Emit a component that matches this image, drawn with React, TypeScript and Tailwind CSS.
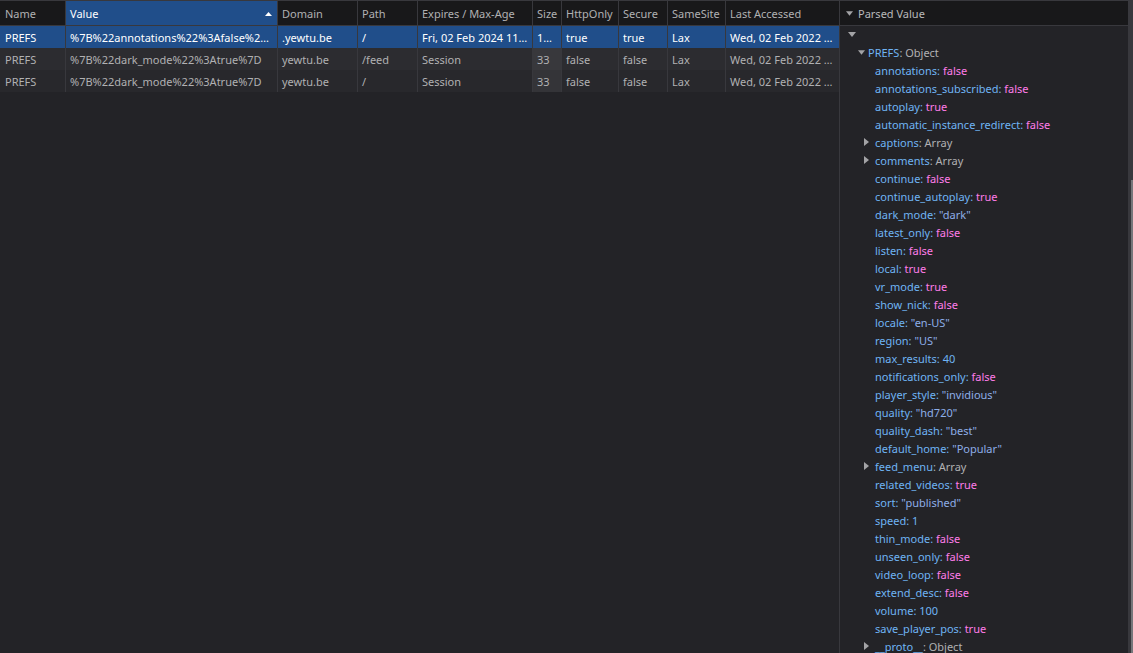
import React from "react";

const cols = [
  { name: "Name", w: 65 },
  { name: "Value", w: 212 },
  { name: "Domain", w: 80 },
  { name: "Path", w: 60 },
  { name: "Expires / Max-Age", w: 115 },
  { name: "Size", w: 29 },
  { name: "HttpOnly", w: 57 },
  { name: "Secure", w: 49 },
  { name: "SameSite", w: 58 },
  { name: "Last Accessed", w: 114 },
];

const rows: string[][] = [
  ["PREFS", "%7B%22annotations%22%3Afalse%2…", ".yewtu.be", "/", "Fri, 02 Feb 2024 11…", "1…", "true", "true", "Lax", "Wed, 02 Feb 2022 …"],
  ["PREFS", "%7B%22dark_mode%22%3Atrue%7D", "yewtu.be", "/feed", "Session", "33", "false", "false", "Lax", "Wed, 02 Feb 2022 …"],
  ["PREFS", "%7B%22dark_mode%22%3Atrue%7D", "yewtu.be", "/", "Session", "33", "false", "false", "Lax", "Wed, 02 Feb 2022 …"],
];

type Kind = "bool" | "str" | "num" | "arr" | "obj";
const items: [string, string, Kind][] = [
  ["annotations", "false", "bool"],
  ["annotations_subscribed", "false", "bool"],
  ["autoplay", "true", "bool"],
  ["automatic_instance_redirect", "false", "bool"],
  ["captions", "Array", "arr"],
  ["comments", "Array", "arr"],
  ["continue", "false", "bool"],
  ["continue_autoplay", "true", "bool"],
  ["dark_mode", '"dark"', "str"],
  ["latest_only", "false", "bool"],
  ["listen", "false", "bool"],
  ["local", "true", "bool"],
  ["vr_mode", "true", "bool"],
  ["show_nick", "false", "bool"],
  ["locale", '"en-US"', "str"],
  ["region", '"US"', "str"],
  ["max_results", "40", "num"],
  ["notifications_only", "false", "bool"],
  ["player_style", '"invidious"', "str"],
  ["quality", '"hd720"', "str"],
  ["quality_dash", '"best"', "str"],
  ["default_home", '"Popular"', "str"],
  ["feed_menu", "Array", "arr"],
  ["related_videos", "true", "bool"],
  ["sort", '"published"', "str"],
  ["speed", "1", "num"],
  ["thin_mode", "false", "bool"],
  ["unseen_only", "false", "bool"],
  ["video_loop", "false", "bool"],
  ["extend_desc", "false", "bool"],
  ["volume", "100", "num"],
  ["save_player_pos", "true", "bool"],
  ["__proto__", "Object", "obj"],
];

function Down({ className = "" }: { className?: string }) {
  return (
    <svg width="8" height="5" viewBox="0 0 8 5" className={className}>
      <path d="M0 0 L8 0 L4 5 Z" fill="#a3a3a6" />
    </svg>
  );
}
function Right() {
  return (
    <svg width="5" height="8" viewBox="0 0 5 8">
      <path d="M0 0 L5 4 L0 8 Z" fill="#a3a3a6" />
    </svg>
  );
}

const valueColor: Record<Kind, string> = {
  bool: "text-[#ff7de9]",
  str: "text-[#8eaee8]",
  num: "text-[#6fb4f4]",
  arr: "text-[#b1b1b3]",
  obj: "text-[#b1b1b3]",
};

export default function App() {
  const rowBg = ["bg-[#204e8a]", "bg-[#2c2c30]", "bg-[#28282c]"];
  const sizeBg = ["bg-[#204e8a]", "bg-[#38383c]", "bg-[#343438]"];
  const rowText = ["text-white", "text-[#b1b1b3]", "text-[#b1b1b3]"];
  return (
    <div
      className="flex h-[653px] w-[1133px] overflow-hidden bg-[#232327] text-[11px] leading-none"
      style={{ fontFamily: '"Noto Sans", "Open Sans", sans-serif' }}
    >
      {/* Left table */}
      <div className="flex w-[839px] flex-col border-t border-[#38383d]">
        <div className="flex h-[25px] shrink-0 border-b border-[#38383d] bg-[#18181a]">
          {cols.map((c, i) => (
            <div
              key={c.name}
              style={{ width: c.w }}
              className={`relative flex shrink-0 items-center whitespace-nowrap ${
                i === 0 ? "pl-[5px]" : "pl-[4px] border-l border-[#38383d]"
              } ${i === 1 ? "bg-[#204e8a] text-white" : "text-[#b1b1b3]"}`}
            >
              {c.name}
              {i === 1 && (
                <svg width="7" height="4" viewBox="0 0 7 4" className="absolute right-[5px] top-[11px]">
                  <path d="M0 4 L7 4 L3.5 0 Z" fill="#ffffff" />
                </svg>
              )}
            </div>
          ))}
        </div>
        {rows.map((r, ri) => (
          <div key={ri} className={`flex h-[22px] shrink-0 ${rowBg[ri]} ${rowText[ri]}`}>
            {r.map((t, ci) => (
              <div
                key={ci}
                style={{ width: cols[ci].w }}
                className={`flex shrink-0 items-center overflow-hidden whitespace-nowrap ${
                  ci === 0 ? "pl-[5px]" : "pl-[4px] border-l border-[#38383d]"
                } ${ci === 5 ? sizeBg[ri] : ""} ${ri === 0 && ci > 0 ? "border-[#1b3f70]" : ""}`}
              >
                {t}
              </div>
            ))}
          </div>
        ))}
      </div>

      {/* Right panel */}
      <div className="flex flex-1 border-l border-[#38383d]">
        <div className="flex flex-1 flex-col border-t border-[#38383d]">
          <div className="flex h-[25px] shrink-0 items-center border-b border-[#38383d] bg-[#18181a] pl-[6px] pt-[1px] text-[#b9b9bb]">
            <Down className="mr-[5px] w-[7px]" />
            <span>Parsed Value</span>
          </div>
          <div className="flex h-[18px] shrink-0 items-center pb-[2px] pl-[8px]">
            <Down />
          </div>
          <div className="flex h-[18px] shrink-0 items-center pb-[2px] pl-[18px] whitespace-nowrap">
            <Down className="mr-[3px] w-[7px]" />
            <span className="text-[#6fb4f4]">PREFS</span>
            <span className="text-[#b1b1b3]">:&nbsp;Object</span>
          </div>
          {items.map(([k, v, kind]) => (
            <div key={k} className="flex h-[18px] shrink-0 items-center pb-[2px] pl-[24px] whitespace-nowrap">
              <div className="flex w-[11px] items-center">{kind === "arr" || kind === "obj" ? <Right /> : null}</div>
              <span className="text-[#6fb4f4]">{k}</span>
              <span className={kind === "arr" || kind === "obj" ? "text-[#b1b1b3]" : "text-[#6fb4f4]"}>:&nbsp;</span>
              <span className={valueColor[kind]}>{v}</span>
            </div>
          ))}
        </div>
        <div className="flex w-[5px] flex-col bg-[#38383d] pt-[180px]">
          <div className="ml-[3px] w-[2px] flex-1 bg-[#76767a]" />
        </div>
      </div>
    </div>
  );
}
